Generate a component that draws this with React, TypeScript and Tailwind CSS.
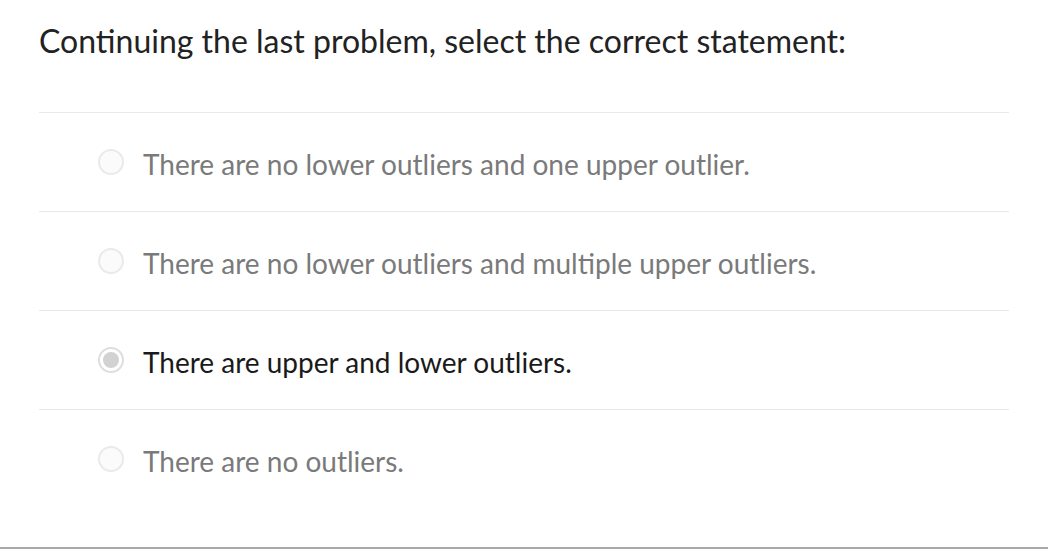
import React from "react";

const OPTIONS = [
  "There are no lower outliers and one upper outlier.",
  "There are no lower outliers and multiple upper outliers.",
  "There are upper and lower outliers.",
  "There are no outliers.",
];

const SELECTED = 2;

const App: React.FC = () => {
  return (
    <div className="w-[1048px] h-[554px] bg-white font-['Lato',sans-serif] flex flex-col">
      <div className="px-[39px] pt-[19px] h-[112px]">
        <h1 className="text-[32px] leading-[44px] text-[#222]">
          Continuing the last problem, select the correct statement:
        </h1>
      </div>
      <div className="mx-[39px] w-[970px]">
        {OPTIONS.map((opt, i) => (
          <div
            key={i}
            className="h-[99px] flex items-center pl-[59px] gap-[19px] border-t border-[#e8e8e8]"
          >
            {i === SELECTED ? (
              <span className="w-[26px] h-[26px] rounded-full border-2 border-[#dedede] bg-white flex items-center justify-center">
                <span className="w-[16px] h-[16px] rounded-full bg-[#d2d2d2]" />
              </span>
            ) : (
              <span className="w-[26px] h-[26px] rounded-full border-2 border-[#eaeaea] bg-[#fbfbfb]" />
            )}
            <span
              className={`text-[28px] pt-[4px] ${i === SELECTED ? "text-[#1a1a1a]" : "text-[#7a7a7a]"}`}
            >
              {opt}
            </span>
          </div>
        ))}
      </div>
      <div className="flex-1" />
      <div className="h-[2px] bg-[#a8a8a8] mb-[5px]" />
    </div>
  );
};

export default App;
